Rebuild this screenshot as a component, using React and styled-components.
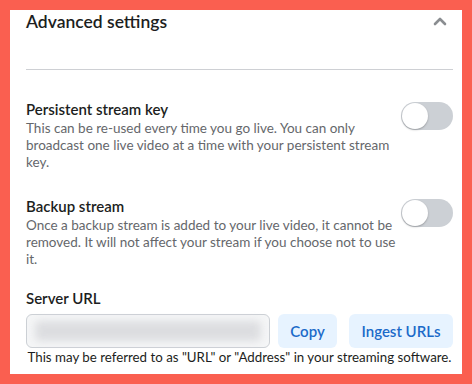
import React from 'react';
import styled, { createGlobalStyle } from 'styled-components';

const GlobalStyle = createGlobalStyle`
  html, body {
    margin: 0;
    padding: 0;
    background: #fa5f50;
  }
  body {
    font-family: Lato, "Noto Sans", "Liberation Sans", sans-serif;
    color: #1c1e21;
  }
`;

const Frame = styled.div`
  width: 472px;
  height: 384px;
  padding: 10px;
  box-sizing: border-box;
  overflow: hidden;
`;

const Panel = styled.div`
  background: #fff;
  height: 364px;
  padding: 0 9px 0 16px;
  box-sizing: border-box;
  display: flex;
  flex-direction: column;
  & > * {
    flex-shrink: 0;
  }
`;

const Header = styled.div`
  display: flex;
  align-items: center;
  justify-content: space-between;
  height: 22px;
`;

const Title = styled.div`
  font-size: 17.5px;
  font-weight: 600;
  color: #1c1e21;
`;

const Divider = styled.div`
  height: 1px;
  background: #ced0d4;
  margin-top: 37px;
`;

const Option = styled.div`
  display: flex;
  justify-content: space-between;
  align-items: flex-start;
  margin-top: ${p => p.$top}px;
`;

const OptionText = styled.div`
  width: 372px;
`;

const OptionTitle = styled.div`
  font-size: 15px;
  font-weight: 600;
  line-height: 18px;
  color: #1c1e21;
`;

const OptionDesc = styled.div`
  font-size: 13.5px;
  line-height: 17px;
  color: #65676b;
  margin-top: 2px;
`;

const Toggle = styled.div`
  width: 52px;
  height: 28px;
  border-radius: 14px;
  background: #ccd0d5;
  position: relative;
  flex-shrink: 0;
  margin-top: 2px;
  &::after {
    content: '';
    position: absolute;
    left: 1px;
    top: 1px;
    width: 26px;
    height: 26px;
    border-radius: 50%;
    background: #fff;
    box-shadow: 0 1px 2px rgba(0, 0, 0, 0.25);
  }
`;

const Label = styled.div`
  font-size: 15px;
  font-weight: 600;
  margin-top: 21px;
  line-height: 18px;
`;

const UrlRow = styled.div`
  display: flex;
  align-items: center;
  margin-top: 7px;
  gap: 8px;
`;

const UrlInput = styled.div`
  width: 244px;
  height: 34px;
  box-sizing: border-box;
  border: 1px solid #ccd0d5;
  border-radius: 6px;
  background: #f5f6f7;
  display: flex;
  align-items: center;
  padding: 0 8px;
`;

const Blur = styled.div`
  flex: 1;
  height: 20px;
  background: #dcdde0;
  filter: blur(4px);
  border-radius: 4px;
`;

const Button = styled.button`
  height: 34px;
  border: none;
  border-radius: 6px;
  background: #e7f3ff;
  color: #1b6ac9;
  font-family: inherit;
  font-size: 15px;
  font-weight: 600;
  padding: 0;
  width: ${p => p.$w}px;
  margin-left: ${p => p.$ml || 0}px;
`;

const Note = styled.div`
  font-size: 13.3px;
  color: #1c1e21;
  text-align: center;
  margin-top: 1px;
  white-space: nowrap;
`;

const Chevron = () => (
  <svg width="14" height="10" viewBox="0 0 14 10" style={{ marginRight: 6 }}>
    <path d="M2 8 L7 3 L12 8" fill="none" stroke="#8a8d91" strokeWidth="2.6" strokeLinecap="round" strokeLinejoin="round" />
  </svg>
);

export default function App() {
  return (
    <Frame>
      <GlobalStyle />
      <Panel>
        <Header>
          <Title>Advanced settings</Title>
          <Chevron />
        </Header>
        <Divider />
        <Option $top={30}>
          <OptionText>
            <OptionTitle>Persistent stream key</OptionTitle>
            <OptionDesc>
              This can be re-used every time you go live. You can only broadcast one live video at a time with your persistent stream key.
            </OptionDesc>
          </OptionText>
          <Toggle />
        </Option>
        <Option $top={26}>
          <OptionText>
            <OptionTitle>Backup stream</OptionTitle>
            <OptionDesc>
              Once a backup stream is added to your live video, it cannot be removed. It will not affect your stream if you choose not to use it.
            </OptionDesc>
          </OptionText>
          <Toggle />
        </Option>
        <Label>Server URL</Label>
        <UrlRow>
          <UrlInput>
            <Blur />
          </UrlInput>
          <Button $w={59}>Copy</Button>
          <Button $w={104} $ml={4}>Ingest URLs</Button>
        </UrlRow>
        <Note>This may be referred to as "URL" or "Address" in your streaming software.</Note>
      </Panel>
    </Frame>
  );
}
